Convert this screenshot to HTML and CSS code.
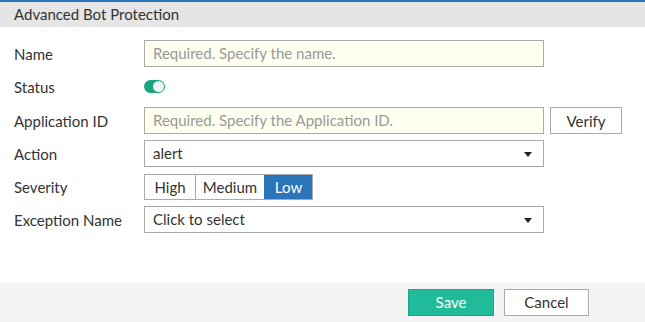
FILE: index.html
```html
<!DOCTYPE html>
<html>
<head>
<meta charset="utf-8">
<link rel="stylesheet" href="styles.css">
</head>
<body>
<div class="dialog">
  <div class="header">Advanced Bot Protection</div>
  <div class="form">
    <div class="row">
      <label class="lbl">Name</label>
      <div class="input req">Required. Specify the name.</div>
    </div>
    <div class="row row-status">
      <label class="lbl">Status</label>
      <span class="toggle"><span class="knob"></span></span>
    </div>
    <div class="row">
      <label class="lbl">Application ID</label>
      <div class="input req">Required. Specify the Application ID.</div>
      <button class="btn verify">Verify</button>
    </div>
    <div class="row">
      <label class="lbl">Action</label>
      <div class="input select">alert<span class="caret"></span></div>
    </div>
    <div class="row">
      <label class="lbl">Severity</label>
      <div class="seg">
        <span class="seg-item high">High</span>
        <span class="seg-item medium">Medium</span>
        <span class="seg-item low active">Low</span>
      </div>
    </div>
    <div class="row">
      <label class="lbl">Exception Name</label>
      <div class="input select">Click to select<span class="caret"></span></div>
    </div>
  </div>
  <div class="footer">
    <button class="btn save">Save</button>
    <button class="btn cancel">Cancel</button>
  </div>
</div>
</body>
</html>
```
FILE: styles.css
```css
html, body {
  margin: 0;
  padding: 0;
  background: #fff;
}
body {
  font-family: Lato, "Open Sans", sans-serif;
  font-size: 15px;
  color: #333;
  width: 645px;
  height: 322px;
  overflow: hidden;
}
.dialog {
  display: flex;
  flex-direction: column;
  height: 322px;
}
.header {
  border-top: 2px solid #2a74b9;
  background: #e5e5e5;
  height: 25px;
  line-height: 25px;
  padding-left: 14px;
  font-size: 15px;
  color: #333;
}
.form {
  flex: 1;
  padding-top: 13px;
  display: flex;
  flex-direction: column;
  gap: 6px;
}
.row {
  display: flex;
  align-items: center;
  height: 27px;
}
.row-status {
  height: 28px;
}
.lbl {
  width: 144px;
  padding-left: 14px;
  box-sizing: border-box;
  flex: none;
}
.input {
  box-sizing: border-box;
  width: 400px;
  height: 27px;
  border: 1px solid #aaa;
  padding: 0 8px;
  line-height: 25px;
  font-size: 15px;
  color: #333;
  position: relative;
}
.req {
  background: #fffff0;
  color: #999;
}
.select {
  background: #fff;
}
.caret {
  position: absolute;
  right: 11px;
  top: 11px;
  width: 0;
  height: 0;
  border-left: 4.5px solid transparent;
  border-right: 4.5px solid transparent;
  border-top: 5px solid #222;
}
.toggle {
  display: inline-block;
  width: 21px;
  height: 13px;
  border-radius: 7px;
  background: #1ba583;
  position: relative;
  margin-top: -2px;
}
.knob {
  position: absolute;
  right: 1px;
  top: 1px;
  width: 11px;
  height: 11px;
  border-radius: 50%;
  background: #f2f2f2;
}
.btn {
  font-family: Lato, "Open Sans", sans-serif;
  font-size: 15px;
  box-sizing: border-box;
  height: 27px;
  background: #fff;
  border: 1px solid #aaa;
  color: #333;
  padding: 0;
  cursor: pointer;
}
.verify {
  margin-left: 6px;
  width: 72px;
}
.seg {
  display: flex;
  height: 26px;
  border: 1px solid #aaa;
  box-sizing: border-box;
}
.seg-item {
  box-sizing: border-box;
  line-height: 24px;
  text-align: center;
  border-left: 1px solid #aaa;
  color: #333;
}
.seg-item.high {
  border-left: none;
  width: 50px;
}
.seg-item.medium {
  width: 69px;
}
.seg-item.low {
  width: 48px;
}
.seg-item.active {
  background: #2a74b9;
  color: #fff;
  border-left-color: #2a74b9;
}
.footer {
  height: 40px;
  background: #f4f4f4;
  display: flex;
  align-items: center;
  padding-left: 408px;
  gap: 10px;
}
.save {
  width: 86px;
  background: #20bb99;
  border-color: #1ea385;
  color: #fff;
}
.cancel {
  width: 85px;
}
```
